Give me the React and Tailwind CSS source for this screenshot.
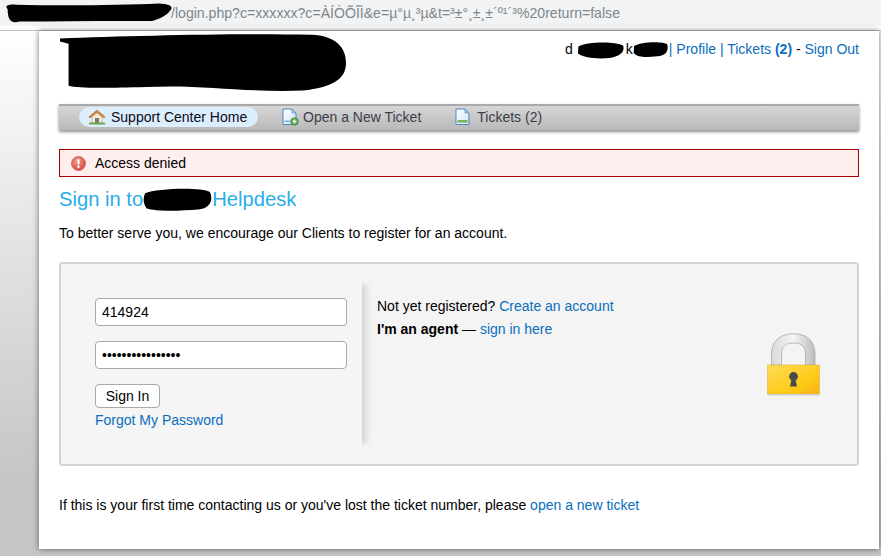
import React from 'react';

const Scribble = ({ className, d }) => (
  <svg className={className} viewBox="0 0 100 100" preserveAspectRatio="none">
    <path d={d} fill="#000" />
  </svg>
);

const HomeIcon = () => (
  <svg width="18" height="16" viewBox="0 0 18 16">
    <path d="M4 7 L9 3 L14 7 V14 H4 Z" fill="#f1ead9" stroke="#b9a67f" strokeWidth="0.6" />
    <path d="M0.8 8 L9 1 L17.2 8 L15.6 8.8 L9 3.6 L2.4 8.8 Z" fill="#d9823b" stroke="#a8642a" strokeWidth="0.5" />
    <rect x="7" y="9" width="4" height="5" fill="#7d7a73" />
    <rect x="1" y="13.6" width="16" height="2" rx="0.6" fill="#6fa84f" />
  </svg>
);

const PageIcon = ({ plus }) => (
  <svg width="17" height="18" viewBox="0 0 17 18">
    <defs>
      <linearGradient id="pageFill" x1="0" y1="0" x2="1" y2="1">
        <stop offset="0" stopColor="#ffffff" />
        <stop offset="1" stopColor="#cfe3f7" />
      </linearGradient>
    </defs>
    <path d="M1 1 H10 L14 5 V16.5 H1 Z" fill="url(#pageFill)" stroke="#4a86c5" strokeWidth="1" />
    <path d="M10 1 V5 H14 Z" fill="#a9cdf0" stroke="#4a86c5" strokeWidth="0.6" />
    {plus ? (
      <>
        <rect x="2.5" y="12.5" width="6" height="1.6" fill="#7db4e6" />
        <circle cx="12.5" cy="13.5" r="3.8" fill="#5aa64a" stroke="#3f7d36" strokeWidth="0.6" />
        <path d="M10.6 13.5 H14.4 M12.5 11.6 V15.4" stroke="#fff" strokeWidth="1.3" />
      </>
    ) : (
      <rect x="2.5" y="12" width="10" height="2.6" fill="#7cb356" />
    )}
  </svg>
);

const AlertIcon = () => (
  <svg width="15" height="15" viewBox="0 0 15 15">
    <defs>
      <radialGradient id="alertFill" cx="0.4" cy="0.35" r="0.75">
        <stop offset="0" stopColor="#f29a8e" />
        <stop offset="1" stopColor="#d2453b" />
      </radialGradient>
    </defs>
    <circle cx="7.5" cy="7.5" r="7" fill="url(#alertFill)" stroke="#c9584e" strokeWidth="0.8" />
    <rect x="6.5" y="3" width="2" height="5.6" rx="0.8" fill="#fff" />
    <circle cx="7.5" cy="10.8" r="1.2" fill="#fff" />
  </svg>
);

const LockIcon = () => (
  <svg width="54" height="63" viewBox="0 0 54 63">
    <defs>
      <linearGradient id="shackle" x1="0" y1="0" x2="1" y2="0">
        <stop offset="0" stopColor="#d8dadb" />
        <stop offset="0.5" stopColor="#f4f5f5" />
        <stop offset="1" stopColor="#b9bcbe" />
      </linearGradient>
      <linearGradient id="lockBody" x1="0" y1="0" x2="1" y2="1">
        <stop offset="0" stopColor="#ffdc55" />
        <stop offset="0.7" stopColor="#fdc913" />
        <stop offset="1" stopColor="#f9ae1c" />
      </linearGradient>
    </defs>
    <path d="M4.5 32 V21 C4.5 8 13 0.8 26.5 0.8 C40 0.8 48 8 48 21 V32 H38.5 V21 C38.5 13 34 10 26.5 10 C19 10 14.5 13 14.5 21 V32 Z" fill="url(#shackle)" stroke="#a6a9ab" strokeWidth="0.8" />
    <rect x="0.5" y="32" width="52" height="29" fill="url(#lockBody)" stroke="#dcb43c" strokeWidth="0.6" />
    <rect x="0.5" y="61" width="52" height="1.5" fill="#d0d0d0" />
    <circle cx="26.5" cy="43.5" r="4.4" fill="#4a4a4a" />
    <path d="M24.8 45 L23 53.5 H30 L28.2 45 Z" fill="#4a4a4a" />
  </svg>
);

const A = ({ children, className = '' }) => <a href="#" className={`text-[#0a6ebd] ${className}`}>{children}</a>;

export default function App() {
  return (
    <div className="relative flex h-[556px] w-[881px] flex-col overflow-hidden bg-white font-['Liberation_Sans',Arial,sans-serif] text-[14px] leading-[17px] text-black">
      {/* address bar */}
      <div className="flex h-[26px] items-center bg-[#f1f3f4] pl-[171px] text-[14.1px] text-[#80868b]">
        /login.php?c=xxxxxx?c=ÀÍÒÕÎÌ&amp;e=µ°µ¸³µ&amp;t=³±°¸±¸±´º¹´³%20return=false
      </div>
      <div className="h-[5px] shrink-0 border-b border-[#c4c4c4] bg-white" />

      <div className="flex flex-1 bg-gradient-to-b from-white to-[#c6c6c6] to-85% pr-[2px] pl-[39px]">
        <div className="mb-[7px] flex flex-1 flex-col bg-white px-[20px] shadow-[0_0_6px_rgba(0,0,0,0.55)]">
          {/* header */}
          <div className="flex h-[73px] shrink-0 justify-end pt-[10px]">
            <p>
              <span>d</span>
              <span className="inline-block w-[53px]" />
              <span>k</span>
              <span className="inline-block w-[36px]" />
              <span className="text-[#0a6ebd]">| </span>
              <A>Profile</A>
              <span className="text-[#0a6ebd]"> | </span>
              <A>Tickets <b>(2)</b></A>
              <span> - </span>
              <A>Sign Out</A>
            </p>
          </div>

          {/* nav */}
          <nav className="flex h-[26px] shrink-0 items-center border-t-2 border-[#a9a9a9] bg-gradient-to-b from-[#d6d6d6] to-[#b9b9b9] pb-[2px] pl-[20px] shadow-[0_2px_3px_rgba(0,0,0,0.45)]">
            <div className="flex h-[20px] w-[179px] items-center gap-[5px] rounded-[10px] bg-[#dcedfb] pl-[9px] text-[#0b0b20]">
              <HomeIcon />
              <span>Support Center Home</span>
            </div>
            <div className="ml-[24px] flex items-center gap-[4px] text-[#3d3d48]">
              <PageIcon plus />
              <span>Open a New Ticket</span>
            </div>
            <div className="ml-[34px] flex items-center gap-[5px] text-[#3d3d48]">
              <PageIcon />
              <span>Tickets (2)</span>
            </div>
          </nav>

          {/* notice */}
          <div className="mt-[19px] flex h-[28px] shrink-0 items-center gap-[9px] border border-[#a80000] bg-[#ffeeee] pl-[11px]">
            <AlertIcon />
            <span>Access denied</span>
          </div>

          <h1 className="mt-[10px] text-[20.2px] leading-[24px] text-[#29aee8]">
            Sign in to<span className="inline-block w-[69px]" />Helpdesk
          </h1>
          <p className="mt-[14px]">To better serve you, we encourage our Clients to register for an account.</p>

          {/* login box */}
          <div className="mt-[20px] flex h-[204px] shrink-0 rounded-[4px] border-2 border-[#d2d2d2] bg-[#f4f4f4] pt-[19px] pl-[10px]">
            <form className="flex h-[162px] w-[291px] shrink-0 flex-col bg-[#f5f5f5] pt-[15px] pl-[24px] shadow-[3px_0_9px_-1px_rgba(0,0,0,0.2)] [clip-path:inset(0_-20px_0_0)]">
              <input readOnly value="414924" className="h-[28px] w-[252px] rounded-[4px] border border-[#a9a9a9] bg-white px-[6px] text-[14px] outline-none" />
              <input readOnly type="password" value="aaaaaaaaaaaaaaaa" className="mt-[15px] h-[28px] w-[252px] rounded-[4px] border border-[#a9a9a9] bg-white px-[6px] text-[14px] outline-none" />
              <button type="button" className="mt-[15px] h-[24px] w-[65px] rounded-[4px] border border-[#a9a9a9] bg-white">Sign In</button>
              <A className="mt-[4px]">Forgot My Password</A>
            </form>
            <div className="ml-[15px] flex-1 pt-[15px]">
              <p>Not yet registered? <A>Create an account</A></p>
              <p className="mt-[6px]"><b>I'm an agent</b> — <A>sign in here</A></p>
            </div>
            <div className="mt-[50px] mr-[36px] shrink-0"><LockIcon /></div>
          </div>

          <p className="mt-[31px]">If this is your first time contacting us or you've lost the ticket number, please <A>open a new ticket</A></p>
        </div>
      </div>

      {/* redaction scribbles over the screenshot */}
      <Scribble className="absolute top-[3px] left-[6px] h-[21px] w-[166px]" d="M1 30 C-1 15 1 5 6 8 C35 14 70 10 92 2 C99 4 101 18 99 35 C97 60 92 78 88 86 C60 84 35 88 8 88 C3 100 1 80 1 30 Z" />
      <Scribble className="absolute top-[33px] left-[60px] h-[60px] w-[286px]" d="M0 9 C25 5 60 0 88 3 C96 5 100 22 100 50 C100 78 95 90 85 96 C65 100 50 85 30 90 C15 92 6 92 3 88 L3 18 L0 14 Z" />
      <Scribble className="absolute top-[41px] left-[577px] h-[18px] w-[47px]" d="M3 30 C20 5 80 0 98 25 C102 55 95 80 70 95 C40 100 15 95 2 70 Z" />
      <Scribble className="absolute top-[41px] left-[633px] h-[17px] w-[35px]" d="M3 30 C20 5 85 0 98 20 C102 55 95 85 70 90 C40 95 15 100 2 70 Z" />
      <Scribble className="absolute top-[187px] left-[143px] h-[25px] w-[69px]" d="M3 25 C20 5 85 0 97 20 C102 50 98 85 80 90 C55 95 20 100 5 85 C0 65 0 45 3 25 Z" />
    </div>
  );
}
